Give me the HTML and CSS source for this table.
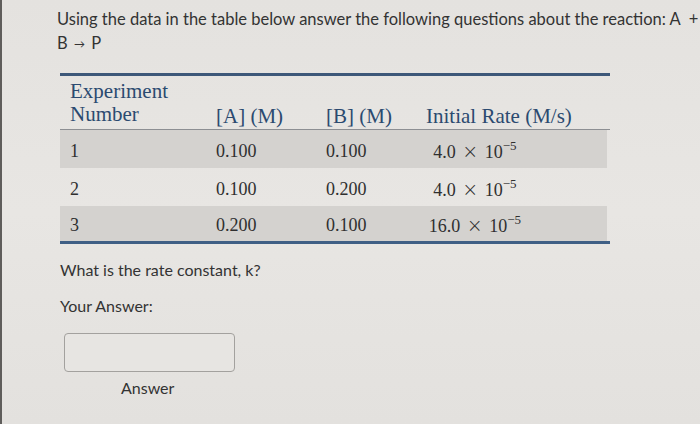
FILE: index.html
```html
<!DOCTYPE html>
<html>
<head>
<meta charset="utf-8">
<link rel="stylesheet" href="styles.css">
</head>
<body>
<div class="screen">
  <p class="intro">Using the data in the table below answer the following questions about the reaction: A&nbsp;&nbsp;+<br>B <span class="arrow">&rarr;</span> P</p>
  <div class="table">
    <div class="row head">
      <div class="c c1">Experiment<br>Number</div>
      <div class="c c2">[A] (M)</div>
      <div class="c c3">[B] (M)</div>
      <div class="c c4">Initial Rate (M/s)</div>
    </div>
    <div class="row shade">
      <div class="c c1">1</div>
      <div class="c c2">0.100</div>
      <div class="c c3">0.100</div>
      <div class="c c4"><span class="rate">4.0 <span class="times">&times;</span> 10<sup>&minus;5</sup></span></div>
    </div>
    <div class="row">
      <div class="c c1">2</div>
      <div class="c c2">0.100</div>
      <div class="c c3">0.200</div>
      <div class="c c4"><span class="rate">4.0 <span class="times">&times;</span> 10<sup>&minus;5</sup></span></div>
    </div>
    <div class="row shade last">
      <div class="c c1">3</div>
      <div class="c c2">0.200</div>
      <div class="c c3">0.100</div>
      <div class="c c4"><span class="rate">16.0 <span class="times">&times;</span> 10<sup>&minus;5</sup></span></div>
    </div>
  </div>
  <p class="question">What is the rate constant, k?</p>
  <p class="label">Your Answer:</p>
  <div class="input"></div>
  <div class="answer">Answer</div>
</div>
</body>
</html>
```
FILE: styles.css
```css
html, body {
  margin: 0;
  padding: 0;
  width: 700px;
  height: 424px;
  overflow: hidden;
}
body {
  background: #e5e3e0;
}
.screen {
  box-sizing: border-box;
  width: 700px;
  height: 424px;
  border-left: 2px solid #5f5d5b;
  background: linear-gradient(180deg, #e4e2df 0%, #e8e6e3 50%, #e3e1de 100%);
  padding: 7px 0 0 55px;
  font-family: Lato, "Liberation Sans", sans-serif;
  color: #333333;
  overflow: hidden;
}
.intro {
  margin: 0;
  font-size: 16.5px;
  line-height: 24px;
  white-space: nowrap;
}
.arrow {
  font-size: 11px;
  padding: 0 2px;
  vertical-align: 1px;
}
.table {
  margin: 17px 0 0 3px;
  width: 550px;
  border-top: 3px solid #3d5879;
  border-bottom: 3px solid #3f5f85;
  font-family: "Liberation Serif", "DejaVu Serif", serif;
  color: #2f2f2f;
}
.row {
  display: grid;
  grid-template-columns: 146px 110px 100px 194px;
  height: 38px;
  align-items: center;
  font-size: 18px;
}
.row.head {
  height: 52px;
  align-items: end;
  padding-bottom: 1px;
  border-bottom: 1px solid #8d8f93;
  color: #2b4a70;
  font-size: 21px;
  line-height: 23px;
}
.row.head .c {
  padding-bottom: 2px;
}
.row.head .c1 {
  padding-bottom: 4px;
}
.row.shade {
  background: #d4d2cf;
  margin-right: 3px;
}
.row.last {
  height: 35px;
}
.c {
  padding-left: 10px;
  padding-top: 4px;
}
.rate {
  display: inline-block;
  width: 98px;
  text-align: center;
  white-space: nowrap;
}
.times {
  font-family: "DejaVu Sans", sans-serif;
  font-size: 19px;
  font-weight: 300;
  padding: 0 2px;
}
sup {
  font-size: 13px;
  vertical-align: 8px;
  line-height: 0;
}
.question {
  margin: 16px 0 0 3px;
  font-size: 16px;
  line-height: 20px;
}
.label {
  margin: 16px 0 0 3px;
  font-size: 16px;
  line-height: 20px;
}
.input {
  margin: 17px 0 0 7px;
  width: 169px;
  height: 37px;
  border: 1.5px solid #a3a19e;
  border-radius: 4px;
  background: #e7e5e2;
}
.answer {
  margin: 6px 0 0 64px;
  font-size: 16px;
  line-height: 20px;
}
```
